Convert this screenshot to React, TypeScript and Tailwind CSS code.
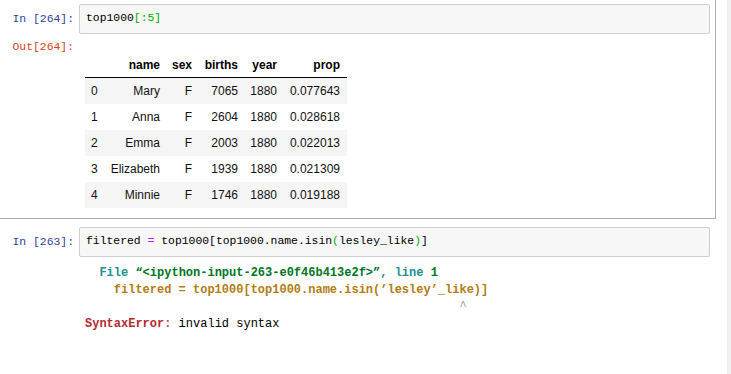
import React from 'react';

const mono = "font-['Liberation_Mono','DejaVu_Sans_Mono',monospace]";

const rows = [
  ['0', 'Mary', 'F', '7065', '1880', '0.077643'],
  ['1', 'Anna', 'F', '2604', '1880', '0.028618'],
  ['2', 'Emma', 'F', '2003', '1880', '0.022013'],
  ['3', 'Elizabeth', 'F', '1939', '1880', '0.021309'],
  ['4', 'Minnie', 'F', '1746', '1880', '0.019188'],
];

const Prompt = ({ children, out }: { children: React.ReactNode; out?: boolean }) => (
  <div
    className={`w-[79px] shrink-0 pr-[5px] text-right text-[11.4px] leading-[17px] ${mono} ${
      out ? 'text-[#D84315]' : 'text-[#303F9F]'
    }`}
  >
    {children}
  </div>
);

const InputBox = ({ children }: { children: React.ReactNode }) => (
  <div
    className={`w-[631px] h-[30px] flex items-center pl-[6px] bg-[#f7f7f7] border border-[#cfcfcf] rounded-[2px] text-[11.4px] text-black whitespace-pre ${mono}`}
  >
    {children}
  </div>
);

export default function App() {
  return (
    <div className="w-[731px] h-[374px] bg-white flex overflow-hidden">
      <div className="flex-1 flex flex-col">
        {/* selected cell */}
        <div className="w-[716px] h-[219px] border-r border-b border-[#ababab] pt-[4px] flex flex-col">
          <div className="flex items-center">
            <Prompt>In [264]:</Prompt>
            <InputBox>
              top1000<span className="text-[#00aa00]">[:5]</span>
            </InputBox>
          </div>
          <div className="flex mt-[5px]">
            <Prompt out>Out[264]:</Prompt>
            <div className="pl-[6px] pt-[13px] font-['Liberation_Sans',Arial,sans-serif] text-[12px] text-[#111]">
              <div className="flex h-[26px] items-center font-bold border-b border-black text-black">
                <div className="w-[20px]" />
                <div className="w-[61px] text-right pr-[6px]">name</div>
                <div className="w-[32px] text-right pr-[6px]">sex</div>
                <div className="w-[46px] text-right pr-[6px]">births</div>
                <div className="w-[39px] text-right pr-[6px]">year</div>
                <div className="w-[64px] text-right pr-[7px]">prop</div>
              </div>
              {rows.map((r, i) => (
                <div
                  key={r[0]}
                  className={`flex h-[26px] items-center ${i % 2 === 0 ? 'bg-[#f5f5f5]' : 'bg-white'}`}
                >
                  <div className="w-[20px] pl-[6px]">{r[0]}</div>
                  <div className="w-[61px] text-right pr-[6px]">{r[1]}</div>
                  <div className="w-[32px] text-right pr-[6px]">{r[2]}</div>
                  <div className="w-[46px] text-right pr-[6px]">{r[3]}</div>
                  <div className="w-[39px] text-right pr-[6px]">{r[4]}</div>
                  <div className="w-[64px] text-right pr-[7px]">{r[5]}</div>
                </div>
              ))}
            </div>
          </div>
        </div>

        {/* error cell */}
        <div className="pt-[8px] flex flex-col">
          <div className="flex items-center">
            <Prompt>In [263]:</Prompt>
            <InputBox>
              filtered <span className="text-[#AA22FF]">=</span> top1000[top1000.name.isin
              <span className="text-[#00aa00]">(</span>lesley_like<span className="text-[#00aa00]">)</span>]
            </InputBox>
          </div>
          <div className="flex mt-[8px]">
            <div className="w-[79px] shrink-0" />
            <pre className={`pl-[6px] text-[12px] leading-[17px] ${mono}`}>
              <span className="font-bold">
                {'  '}
                <span className="text-[#258F8F]">File </span>
                <span className="text-[#007427]">“&lt;ipython-input-263-e0f46b413e2f&gt;”</span>
                <span className="text-[#258F8F]">, line </span>
                <span className="text-[#007427]">1</span>
              </span>
              {'\n'}
              <span className="font-bold text-[#B27D12]">
                {'    filtered = top1000[top1000.name.isin(’lesley’_like)]'}
              </span>
              {'\n'}
              <span className="text-[#999]">{' '.repeat(52) + '^'}</span>
              {'\n'}
              <span className="font-bold text-[#B22B31]">SyntaxError</span>
              <span className="text-[#B22B31]">:</span>
              <span className="text-black"> invalid syntax</span>
            </pre>
          </div>
        </div>
      </div>
      <div className="w-[4px] bg-[#f0f0f0]" />
    </div>
  );
}
